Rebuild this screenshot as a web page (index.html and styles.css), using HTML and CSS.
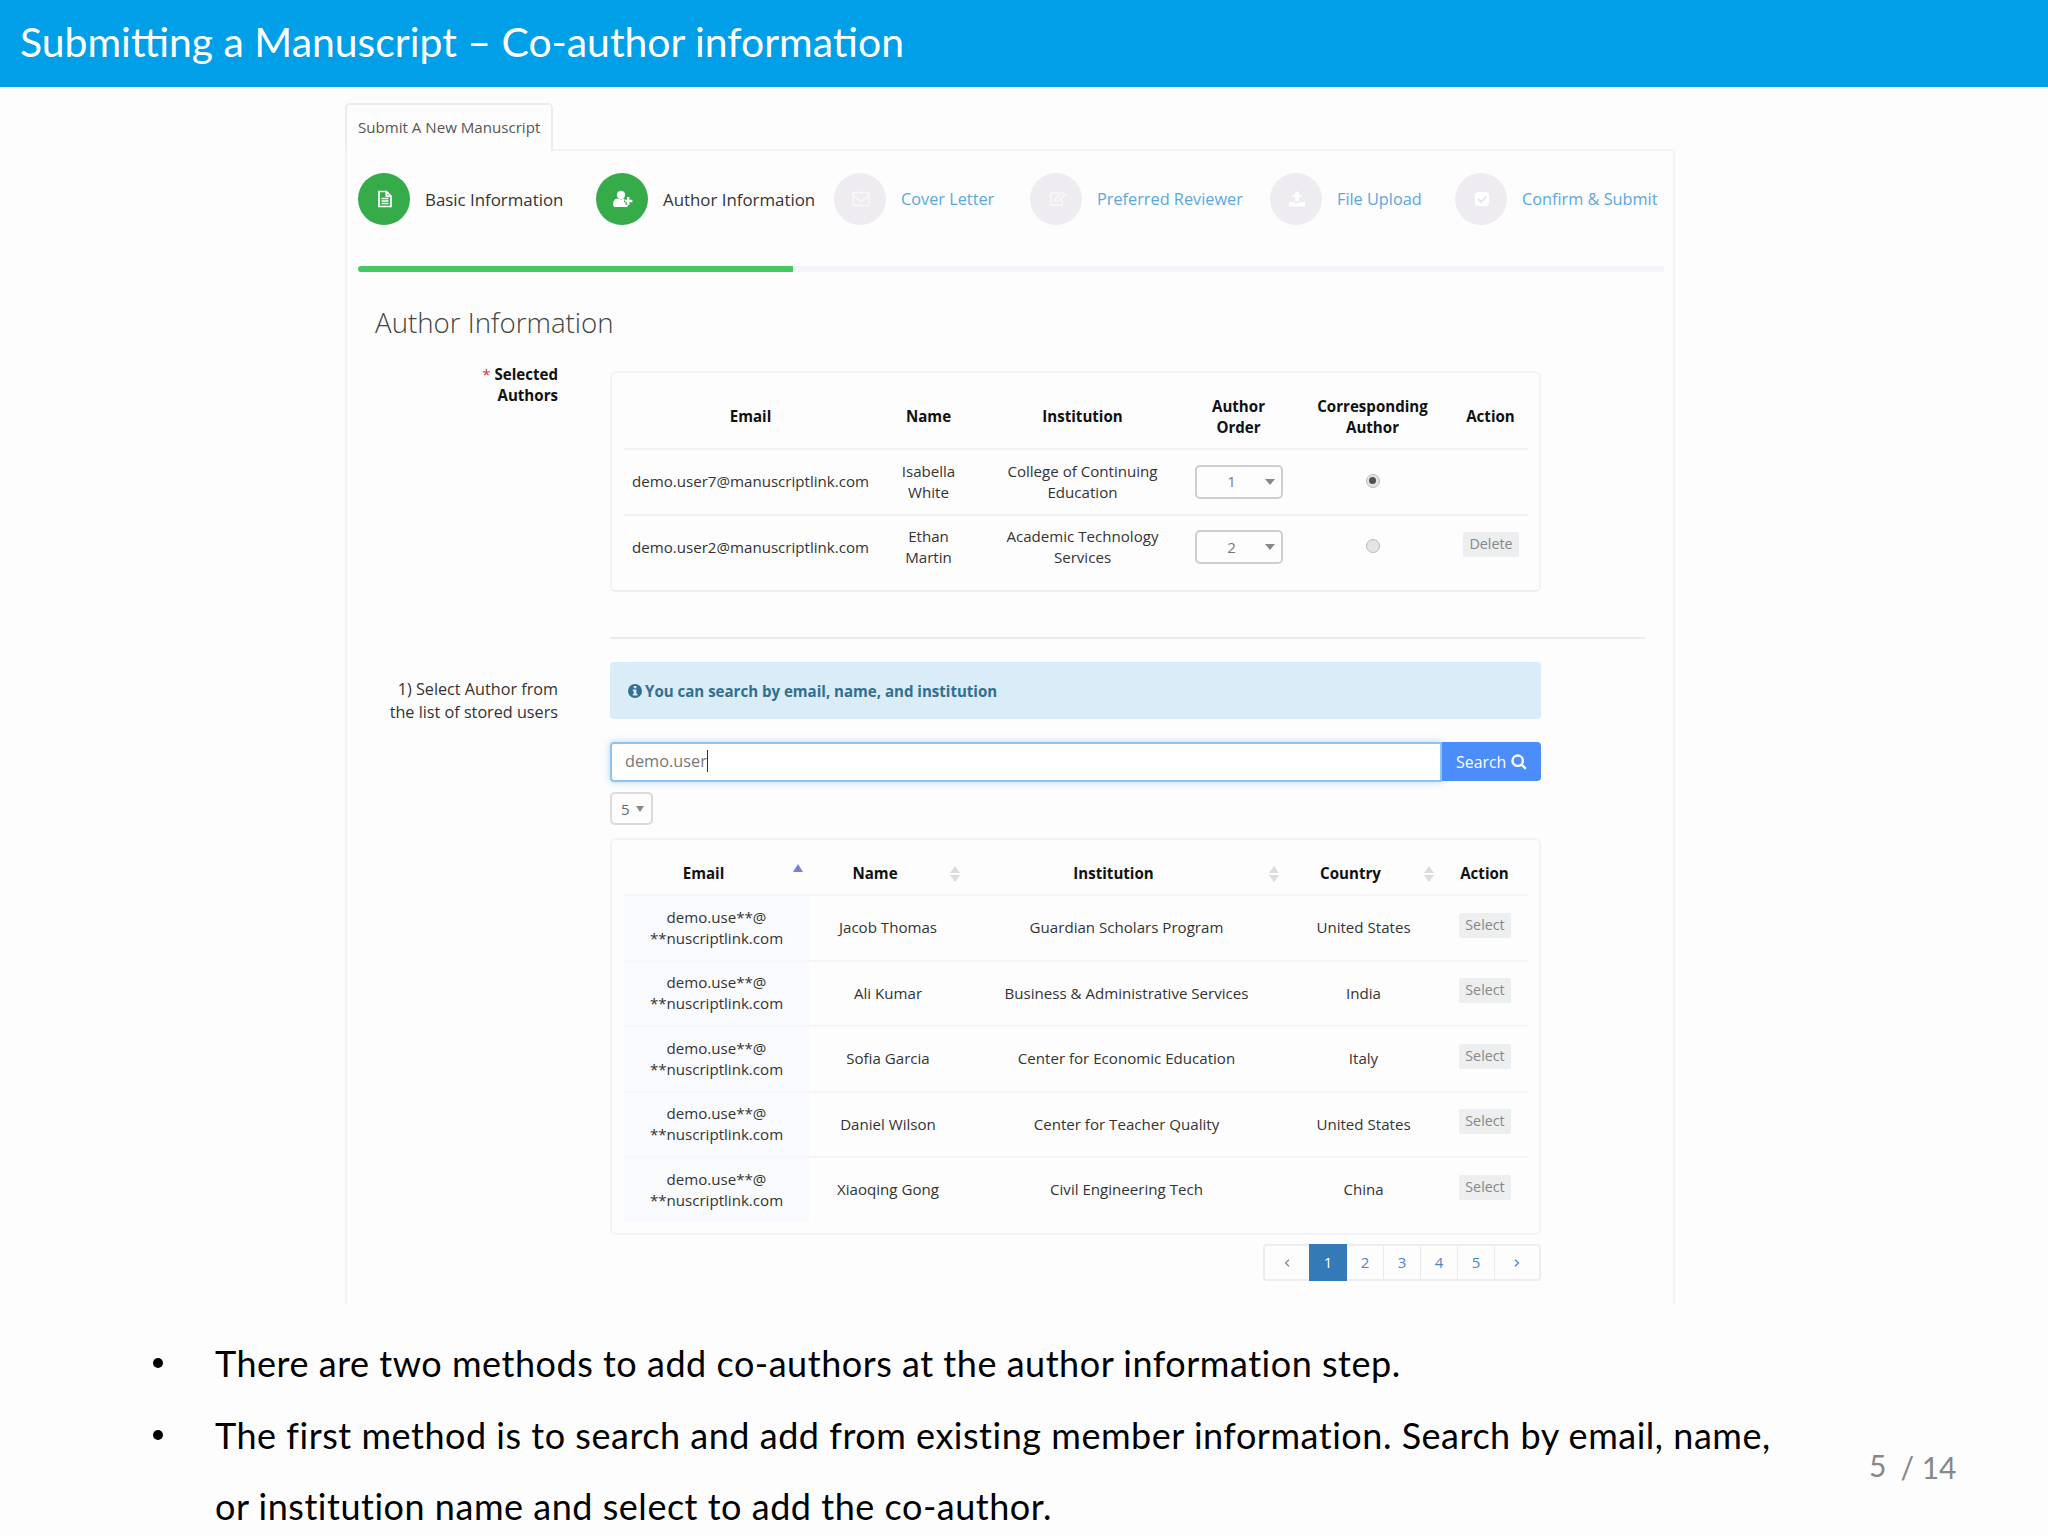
FILE: index.html
```html
<!DOCTYPE html>
<html lang="en">
<head>
    <meta charset="UTF-8">
    <meta name="viewport" content="width=device-width, initial-scale=1.0">
    <title>Submitting a Manuscript</title>
    <link rel="stylesheet" href="styles.css">
</head>
<body>
    <header class="slide-header">
        <h1>Submitting a Manuscript – Co-author information</h1>
    </header>

    <main class="app">
        <div class="tab">Submit A New Manuscript</div>
        <div class="panel">
            <div class="steps">
                <div class="step done">
                    <span class="circle"><svg width="16" height="18" viewBox="0 0 16 18" fill="none" stroke="#fff" stroke-width="1.7"><path d="M2 1.5h7.5L14 6v10.5H2zM9.300 1.500V6.200H14M4.500 8.500h7M4.500 11h7M4.500 13.500h7"/></svg></span>
                    <span class="label">Basic Information</span>
                </div>
                <div class="step done">
                    <span class="circle"><svg width="20" height="18" viewBox="0 0 20 18" fill="#fff"><circle cx="8" cy="5" r="4.200"/><path d="M4 8.500c-3 .7-4 3-3.800 6.500.1 1.200.8 2 2 2H13c1 0 1.800-.5 2-1.500l-.2-1h-2.300V11h-1V8.700L8 9.500zM14 7h2.400v2.800h3v2.400h-3V15H14v-2.800h-3V9.800h3z"/></svg></span>
                    <span class="label">Author Information</span>
                </div>
                <div class="step">
                    <span class="circle"><svg width="18" height="16" viewBox="0 0 18 16" fill="none" stroke="#f9f7fa" stroke-width="1.600"><path d="M1 1.500h16v13H1zM1 4l8 6.500L17 4"/></svg></span>
                    <span class="label">Cover Letter</span>
                </div>
                <div class="step">
                    <span class="circle"><svg width="18" height="16" viewBox="0 0 18 16" fill="none" stroke="#f9f7fa" stroke-width="1.600"><path d="M12 2H3v12h11V9M7 10.500V8l7.500-6.500L17 4l-7.500 6.500z"/></svg></span>
                    <span class="label">Preferred Reviewer</span>
                </div>
                <div class="step">
                    <span class="circle"><svg width="16" height="16" viewBox="0 0 16 16" fill="#fff"><path d="M8 0l5 6h-3v4H6V6H3zM0 11h4.500c.5 1.500 6.500 1.500 7 0H16v4.500H0z"/></svg></span>
                    <span class="label">File Upload</span>
                </div>
                <div class="step">
                    <span class="circle"><svg width="16" height="16" viewBox="0 0 16 16"><rect x="1" y="1" width="14" height="14" rx="3" fill="#fff"/><path d="M4 8l3 3 5.500-5.500" fill="none" stroke="#e9e6ea" stroke-width="2"/></svg></span>
                    <span class="label">Confirm &amp; Submit</span>
                </div>
            </div>
            <div class="progress"><div class="progress-bar"></div></div>

            <h2>Author Information</h2>

            <div class="form-row">
                <div class="form-label bold"><span class="required">*</span> Selected<br>Authors</div>
                <div class="form-body">
                    <div class="box selected-box">
                        <table class="selected-table">
                            <colgroup><col class="s1"><col class="s2"><col class="s3"><col class="s4"><col class="s5"><col class="s6"></colgroup>
                            <thead>
                                <tr><th>Email</th><th>Name</th><th>Institution</th><th>Author<br>Order</th><th>Corresponding<br>Author</th><th>Action</th></tr>
                            </thead>
                            <tbody>
                                <tr>
                                    <td class="email">demo.user7@manuscriptlink.com</td>
                                    <td>Isabella<br>White</td>
                                    <td>College of Continuing<br>Education</td>
                                    <td><span class="select"><span>1</span><i class="caret"></i></span></td>
                                    <td><span class="radio checked"></span></td>
                                    <td></td>
                                </tr>
                                <tr>
                                    <td class="email">demo.user2@manuscriptlink.com</td>
                                    <td>Ethan<br>Martin</td>
                                    <td>Academic Technology<br>Services</td>
                                    <td><span class="select"><span>2</span><i class="caret"></i></span></td>
                                    <td><span class="radio"></span></td>
                                    <td><span class="btn-small">Delete</span></td>
                                </tr>
                            </tbody>
                        </table>
                    </div>
                </div>
            </div>

            <div class="divider"></div>

            <div class="form-row">
                <div class="form-label stored">1) Select Author from<br>the list of stored users</div>
                <div class="form-body">
                    <div class="alert">
                        <svg width="14" height="14" viewBox="0 0 14 14"><circle cx="7" cy="7" r="7" fill="#31708f"/><path d="M5.800 2h2.600v2.200H5.800zM4.800 5.500h3.600v4.300h1v1.700H4.800V9.800h1V7.200h-1z" fill="#d9edf7"/></svg>
                        <span>You can search by email, name, and institution</span>
                    </div>
                    <div class="search-group">
                        <div class="search-input"><span>demo.user</span></div>
                        <div class="search-button"><span>Search</span><svg width="16" height="16" viewBox="0 0 16 16" fill="none" stroke="#fff" stroke-width="2.400"><circle cx="6.700" cy="6.700" r="5.200"/><path d="M10.500 10.500l4.300 4.300"/></svg></div>
                    </div>
                    <div class="page-size"><span>5</span><i class="caret"></i></div>
                    <div class="box users-box">
                        <table class="users-table">
                            <colgroup><col class="u1"><col class="u2"><col class="u3"><col class="u4"><col class="u5"></colgroup>
                            <thead>
                                <tr>
                                    <th class="sort asc">Email</th>
                                    <th class="sort">Name</th>
                                    <th class="sort">Institution</th>
                                    <th class="sort">Country</th>
                                    <th>Action</th>
                                </tr>
                            </thead>
                            <tbody id="users-body"></tbody>
                        </table>
                    </div>
                    <div class="pagination">
                        <span class="edge prev"><svg width="6" height="8" viewBox="0 0 6 8"><path d="M5 .8L1.500 4 5 7.200"/></svg></span>
                        <span class="active">1</span>
                        <span>2</span>
                        <span>3</span>
                        <span>4</span>
                        <span>5</span>
                        <span class="edge"><svg width="6" height="8" viewBox="0 0 6 8"><path d="M1 .8L4.500 4 1 7.200"/></svg></span>
                    </div>
                </div>
            </div>
        </div>
    </main>

    <footer class="notes">
        <ul>
            <li>There are two methods to add co-authors at the author information step.</li>
            <li>The first method is to search and add from existing member information. Search by email, name,<br>or institution name and select to add the co-author.</li>
        </ul>
        <div class="page-number"><span class="current">5</span><span>/ 14</span></div>
    </footer>

    <script>
        const users = [
            { name: "Jacob Thomas", institution: "Guardian Scholars Program", country: "United States" },
            { name: "Ali Kumar", institution: "Business & Administrative Services", country: "India" },
            { name: "Sofia Garcia", institution: "Center for Economic Education", country: "Italy" },
            { name: "Daniel Wilson", institution: "Center for Teacher Quality", country: "United States" },
            { name: "Xiaoqing Gong", institution: "Civil Engineering Tech", country: "China" }
        ];

        const usersBody = document.getElementById('users-body');

        users.forEach(user => {
            const row = document.createElement('tr');
            row.innerHTML = `
                <td class="sorted">demo.use**@<br>**nuscriptlink.com</td>
                <td>${user.name}</td>
                <td>${user.institution.replace('&', '&amp;')}</td>
                <td>${user.country}</td>
                <td><span class="btn-small">Select</span></td>
            `;
            usersBody.appendChild(row);
        });
    </script>
</body>
</html>
```

FILE: styles.css
```css
* {
    box-sizing: border-box;
}

body {
    margin: 0;
    width: 2048px;
    height: 1536px;
    overflow: hidden;
    background: #fdfdfe;
    color: #333;
    font-family: "Open Sans", sans-serif;
    font-size: 15.1px;
}

.slide-header {
    height: 87px;
    padding-left: 20px;
    background: #009fe8;
}

h1 {
    margin: 0;
    color: #fff;
    font-family: Lato, sans-serif;
    font-size: 40.9px;
    font-weight: 400;
    line-height: 84px;
    white-space: nowrap;
}

.app {
    width: 1330px;
    margin: 16px 0 0 345px;
}

.tab {
    position: relative;
    width: 208px;
    height: 48px;
    padding-left: 11px;
    border: 2px solid #eeebf0;
    border-bottom: none;
    border-radius: 5px 5px 0 0;
    background: #fdfdfe;
    color: #555;
    line-height: 44px;
    white-space: nowrap;
    z-index: 1;
}

.panel {
    height: 1155px;
    margin-top: -2px;
    padding: 22px 10px 0 11px;
    border: 2px solid #f5f3f7;
    border-bottom: none;
}

.steps {
    display: flex;
    height: 52px;
}

.step {
    display: flex;
    align-items: center;
    width: 196px;
    color: #5aa7dc;
    font-size: 16.3px;
    white-space: nowrap;
}

.step:nth-child(1) { width: 238px; }
.step:nth-child(2) { width: 238px; }
.step:nth-child(4) { width: 240px; }
.step:nth-child(5) { width: 185px; }

.step.done {
    color: #333;
    font-size: 16.85px;
}

.circle {
    display: flex;
    flex: none;
    align-items: center;
    justify-content: center;
    width: 52px;
    height: 52px;
    margin-right: 15px;
    padding-left: 2px;
    border-radius: 50%;
    background: #eeecf0;
}

.done .circle {
    background: #36ab49;
}

.progress {
    width: 1306px;
    height: 6px;
    margin-top: 41px;
    background: #f5f3f7;
}

.progress-bar {
    width: 435px;
    height: 6px;
    border-radius: 3px 0 0 3px;
    background: #46c95f;
}

h2 {
    height: 60px;
    margin: 20px 0 0 17px;
    color: #444;
    font-size: 27.7px;
    font-weight: 300;
    line-height: 60px;
}

.form-row {
    display: flex;
}

.form-label {
    width: 200px;
    margin-top: 12px;
    color: #333;
    line-height: 21px;
    text-align: right;
    white-space: nowrap;
}

.form-label.bold {
    color: #111;
    font-weight: 700;
}

.form-label.stored {
    margin-top: 16px;
    font-size: 16.2px;
    line-height: 23px;
}

.required {
    color: #e0303a;
    font-weight: 400;
}

.form-body {
    width: 931px;
    margin-left: 52px;
}

.box {
    padding: 0 12px;
    border: 2px solid #f4f2f6;
    border-radius: 6px;
}

.selected-box {
    height: 221px;
    margin-top: 19px;
    border-bottom-color: #ececee;
}

table {
    width: 904px;
    border-collapse: separate;
    border-spacing: 0;
    table-layout: fixed;
}

.s1 { width: 253px; }
.s2 { width: 103px; }
.s3 { width: 205px; }
.s4 { width: 107px; }
.s5 { width: 161px; }
.s6 { width: 75px; }
.u1 { width: 185px; }
.u2 { width: 158px; }
.u3 { width: 319px; }
.u4 { width: 155px; }
.u5 { width: 87px; }

th, td {
    padding: 0;
    line-height: 21px;
    text-align: center;
    vertical-align: middle;
    white-space: nowrap;
}

th {
    color: #111;
    font-weight: 700;
}

td {
    height: 65.5px;
    border-top: 2px solid #f4f1f6;
}

.selected-table th {
    height: 75px;
    padding-top: 12px;
}

.select {
    display: flex;
    position: relative;
    align-items: center;
    justify-content: center;
    width: 88px;
    height: 34px;
    margin: 0 auto;
    padding-right: 14px;
    border: 2px solid #cfcdd2;
    border-radius: 5px;
    color: #777;
}

.caret {
    border: 5px solid transparent;
    border-top: 6px solid #888;
    border-bottom: none;
}

.select .caret {
    position: absolute;
    right: 6px;
    top: 12px;
}

.radio {
    display: flex;
    align-items: center;
    justify-content: center;
    width: 14px;
    height: 14px;
    margin: -2px auto 0;
    border: 1px solid #bbb;
    border-radius: 50%;
    background: #e4e3e5;
}

.radio.checked::after {
    content: "";
    width: 7px;
    height: 7px;
    border-radius: 50%;
    background: #505055;
}

.btn-small {
    display: inline-block;
    height: 25px;
    margin: 0 0 5px 1px;
    padding: 0 6px;
    border-radius: 2px;
    background: #eceeef;
    color: #888;
    font-size: 14.3px;
    line-height: 24px;
    vertical-align: middle;
}

.divider {
    width: 1035px;
    height: 2px;
    margin: 45px 0 23px 252px;
    background: #ebebee;
}

.alert {
    display: flex;
    align-items: center;
    gap: 3px;
    height: 57px;
    padding-left: 18px;
    border-radius: 4px;
    background: #d9ecf7;
    color: #31708f;
    font-size: 15.05px;
    font-weight: 700;
}

.search-group {
    display: flex;
    height: 40px;
    margin-top: 23px;
}

.search-input {
    display: flex;
    align-items: center;
    width: 832px;
    padding: 0 0 2px 13px;
    border: 2px solid #8fc3f0;
    border-radius: 4px 0 0 4px;
    background: #fff;
    box-shadow: 0 0 7px rgba(102, 175, 233, 0.5);
    color: #777;
    font-size: 16.3px;
}

.search-input span {
    border-right: 1px solid #333;
}

.search-button {
    display: flex;
    align-items: center;
    gap: 5px;
    width: 99px;
    height: 39px;
    padding-left: 14px;
    border-radius: 0 4px 4px 0;
    background: #4a8dfb;
    color: #fff;
    font-size: 15.9px;
}

.page-size {
    display: flex;
    align-items: center;
    gap: 6px;
    width: 43px;
    height: 33px;
    margin: 10px 0 13px;
    padding-left: 9px;
    border: 2px solid #dcdadf;
    border-radius: 5px;
    color: #666;
}

.page-size .caret {
    border-width: 6px 4px 0;
}

.users-box {
    height: 397px;
}

.users-table th {
    height: 54px;
    padding-top: 12px;
}

.users-table th.sort {
    position: relative;
    padding-right: 26px;
}

.sort::before, .sort::after {
    content: "";
    position: absolute;
    right: 7px;
    top: 26px;
    border: 5px solid transparent;
    border-top: none;
    border-bottom: 7px solid #dddbdf;
}

.sort::after {
    top: 35px;
    border-top: 7px solid #dddbdf;
    border-bottom: none;
}

.sort.asc::before {
    right: 6px;
    top: 24px;
    border-bottom: 8px solid #7b7fdc;
}

.sort.asc::after {
    display: none;
}

.users-table td {
    border-top-color: #f7f5f9;
}

.users-table td.sorted {
    background: #f9fafe;
}

.pagination {
    display: flex;
    width: 278px;
    height: 37px;
    margin: 9px 0 0 653px;
    border: 2px solid #eeecf1;
    border-radius: 4px;
    color: #4a86c5;
    font-size: 15px;
}

.pagination span {
    width: 37px;
    border-right: 1px solid #ebe9ee;
    line-height: 33px;
    text-align: center;
}

.pagination .edge {
    display: flex;
    align-items: center;
    justify-content: center;
    width: 44px;
    border: none;
}

.edge svg {
    fill: none;
    stroke: #4a86c5;
    stroke-width: 1.3;
}

.prev svg {
    stroke: #888;
}

.pagination .active {
    width: 38px;
    height: 37px;
    margin-top: -2px;
    border: none;
    background: #337ab7;
    color: #fff;
    line-height: 37px;
}

.notes {
    display: flex;
    height: 232px;
    color: #000;
    font-family: Lato, sans-serif;
    font-size: 36px;
    letter-spacing: 0.52px;
}

.notes ul {
    width: 1869px;
    margin: 24px 0 0;
    padding: 0;
    list-style: none;
}

.notes li {
    position: relative;
    padding-left: 215px;
    line-height: 71.7px;
    white-space: nowrap;
}

.notes li::before {
    content: "";
    position: absolute;
    left: 153px;
    top: 30px;
    width: 10px;
    height: 10px;
    border-radius: 50%;
    background: #000;
}

.page-number {
    display: flex;
    gap: 14px;
    margin-top: 143px;
    color: #888;
    font-size: 30px;
    letter-spacing: 0;
    line-height: 40px;
    white-space: nowrap;
}

.page-number .current {
    margin-top: -2px;
}
```
